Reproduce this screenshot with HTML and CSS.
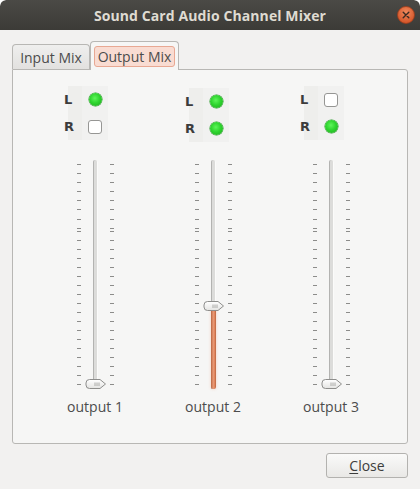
FILE: index.html
```html
<!DOCTYPE html>
<html>
<head>
<meta charset="utf-8">
<link rel="stylesheet" href="styles.css">
</head>
<body>
<div class="window">
  <header class="titlebar">
    <span></span>
    <span class="title">Sound Card Audio Channel Mixer</span>
    <span class="wclose"><svg width="18" height="18" viewBox="0 0 18 18"><defs><radialGradient id="cg" cx="50%" cy="35%" r="60%"><stop offset="0" stop-color="#f08a5d"/><stop offset="1" stop-color="#d4562a"/></radialGradient></defs><circle cx="9" cy="9" r="8.5" fill="url(#cg)" stroke="#9c3c1c" stroke-width="0.8"/><path d="M6.2 6.2 L11.8 11.8 M11.8 6.2 L6.2 11.8" stroke="#3a2a22" stroke-width="1.4" stroke-linecap="round"/></svg></span>
  </header>
  <main class="content">
    <div class="notebook">
      <div class="tabs">
        <div class="tab">Input Mix</div>
        <div class="tab active"><span class="tab-hl">Output Mix</span></div>
      </div>
      <div class="frame">
        <div class="channel">
          <div class="ind">
            <span class="lbl">L</span><span class="cell"><span class="led"></span></span>
            <span class="lbl">R</span><span class="cell"><span class="chk"></span></span>
          </div>
          <div class="slider">
            <div class="ticks">
              <i></i><i></i><i></i><i></i><i></i><i></i><i class="w"></i><i></i><i class="n"></i><i></i><i></i><i></i><i></i><i></i><i></i><i></i><i></i><i></i><i></i><i></i><i></i><i></i><i></i><i></i><i></i><i></i>
            </div>
            <div class="track"></div>
            <div class="ticks">
              <i></i><i></i><i></i><i></i><i></i><i></i><i class="w"></i><i></i><i class="n"></i><i></i><i></i><i></i><i></i><i></i><i></i><i></i><i></i><i></i><i></i><i></i><i></i><i></i><i></i><i></i><i></i><i></i>
            </div>
            <svg class="knob" style="top:218px" width="22" height="12" viewBox="0 0 22 12"><defs><linearGradient id="kg1" x1="0" y1="0" x2="0" y2="1"><stop offset="0" stop-color="#ffffff"/><stop offset="1" stop-color="#e4e4e2"/></linearGradient></defs><path d="M4.5 1.5 H15 L20.5 6 L15 10.5 H4.5 A3.5 3.5 0 0 1 1 7 V5 A3.5 3.5 0 0 1 4.5 1.5 Z" fill="url(#kg1)" stroke="#8e8e8c" stroke-width="1"/><path d="M10 4.5 V8 M12 4.5 V8 M14 4.5 V8" stroke="#9a9a98" stroke-width="0.8"/></svg>
          </div>
          <div class="name">output 1</div>
        </div>
        <div class="channel">
          <div class="ind mid">
            <span class="lbl">L</span><span class="cell"><span class="led"></span></span>
            <span class="lbl">R</span><span class="cell"><span class="led"></span></span>
          </div>
          <div class="slider mid">
            <div class="ticks">
              <i></i><i></i><i></i><i></i><i></i><i></i><i class="w"></i><i></i><i class="n"></i><i></i><i></i><i></i><i></i><i></i><i></i><i></i><i></i><i></i><i></i><i></i><i></i><i></i><i></i><i></i><i></i><i></i>
            </div>
            <div class="track"><div class="fill" style="height:80px"></div></div>
            <div class="ticks">
              <i></i><i></i><i></i><i></i><i></i><i></i><i class="w"></i><i></i><i class="n"></i><i></i><i></i><i></i><i></i><i></i><i></i><i></i><i></i><i></i><i></i><i></i><i></i><i></i><i></i><i></i><i></i><i></i>
            </div>
            <svg class="knob" style="top:140px" width="22" height="12" viewBox="0 0 22 12"><defs><linearGradient id="kg2" x1="0" y1="0" x2="0" y2="1"><stop offset="0" stop-color="#ffffff"/><stop offset="1" stop-color="#e4e4e2"/></linearGradient></defs><path d="M4.5 1.5 H15 L20.5 6 L15 10.5 H4.5 A3.5 3.5 0 0 1 1 7 V5 A3.5 3.5 0 0 1 4.5 1.5 Z" fill="url(#kg2)" stroke="#8e8e8c" stroke-width="1"/><path d="M10 4.5 V8 M12 4.5 V8 M14 4.5 V8" stroke="#9a9a98" stroke-width="0.8"/></svg>
          </div>
          <div class="name">output 2</div>
        </div>
        <div class="channel">
          <div class="ind">
            <span class="lbl">L</span><span class="cell"><span class="chk"></span></span>
            <span class="lbl">R</span><span class="cell"><span class="led"></span></span>
          </div>
          <div class="slider">
            <div class="ticks">
              <i></i><i></i><i></i><i></i><i></i><i></i><i class="w"></i><i></i><i class="n"></i><i></i><i></i><i></i><i></i><i></i><i></i><i></i><i></i><i></i><i></i><i></i><i></i><i></i><i></i><i></i><i></i><i></i>
            </div>
            <div class="track"></div>
            <div class="ticks">
              <i></i><i></i><i></i><i></i><i></i><i></i><i class="w"></i><i></i><i class="n"></i><i></i><i></i><i></i><i></i><i></i><i></i><i></i><i></i><i></i><i></i><i></i><i></i><i></i><i></i><i></i><i></i><i></i>
            </div>
            <svg class="knob" style="top:218px" width="22" height="12" viewBox="0 0 22 12"><defs><linearGradient id="kg3" x1="0" y1="0" x2="0" y2="1"><stop offset="0" stop-color="#ffffff"/><stop offset="1" stop-color="#e4e4e2"/></linearGradient></defs><path d="M4.5 1.5 H15 L20.5 6 L15 10.5 H4.5 A3.5 3.5 0 0 1 1 7 V5 A3.5 3.5 0 0 1 4.5 1.5 Z" fill="url(#kg3)" stroke="#8e8e8c" stroke-width="1"/><path d="M10 4.5 V8 M12 4.5 V8 M14 4.5 V8" stroke="#9a9a98" stroke-width="0.8"/></svg>
          </div>
          <div class="name">output 3</div>
        </div>
      </div>
    </div>
    <div class="actions">
      <button class="btn"><u>C</u>lose</button>
    </div>
  </main>
</div>
</body>
</html>
```
FILE: styles.css
```css
* { box-sizing: border-box; }
html, body { margin: 0; padding: 0; background: #ffffff; }
body { width: 420px; height: 489px; overflow: hidden; font-family: "Open Sans", "DejaVu Sans", sans-serif; color: #4c4c4c; }

.window { width: 420px; height: 489px; display: flex; flex-direction: column; background: #f2f1f0; border-radius: 6px 6px 0 0; overflow: hidden; }

.titlebar {
  height: 30px; flex: none;
  display: grid; grid-template-columns: 1fr auto 1fr; align-items: center;
  background: linear-gradient(#4b4a46, #3c3b37);
  border-radius: 6px 6px 0 0;
}
.title { color: #dfdbd2; font-weight: 700; font-size: 14px; letter-spacing: 0.1px; }
.wclose { justify-self: end; margin-right: 5px; display: flex; }

.content { flex: 1; display: flex; flex-direction: column; padding: 11px 12px 0 12px; }

.notebook { display: flex; flex-direction: column; }
.tabs { display: flex; align-items: flex-end; height: 28px; padding-left: 0; }
.tab {
  height: 25px; width: 78px; display: flex; align-items: center; justify-content: center;
  font-size: 14px; color: #4c4c4c;
  background: linear-gradient(#efefee, #e2e1df);
  border: 1px solid #b8b7b4; border-bottom: none; border-radius: 4px 4px 0 0;
}
.tab.active {
  height: 29px; width: 89px; margin-left: 0; background: #f6f6f5; margin-bottom: -1px; position: relative; z-index: 1;
  padding: 4px 3px 3px;
}
.tab-hl {
  flex: 1; align-self: stretch; display: flex; align-items: center; justify-content: center;
  background: #f9dcd2; border: 1px solid #e8a893; border-radius: 3px; font-size: 14px; color: #4c4c4c;
}

.frame {
  height: 375px; background: #f6f6f5; border: 1px solid #b8b7b4; border-radius: 0 3px 3px 3px;
  display: flex; padding-left: 23px;
}

.channel { width: 118px; display: flex; flex-direction: column; align-items: center; }

.ind {
  margin-top: 16px; margin-right: 14px;
  display: grid; grid-template-columns: 14px 26px; grid-auto-rows: 27px; align-items: center;
  background: #eeeeec;
}
.ind.mid { margin-top: 18px; margin-right: 8px; }
.lbl { font-family: "DejaVu Sans", sans-serif; font-weight: 700; font-size: 13px; color: #3c3c3c; text-align: left; margin-left: -4px; }
.cell { display: flex; justify-content: center; align-items: center; height: 27px; background: #f1f1f0; }
.led {
  width: 13px; height: 13px; border-radius: 50%;
  background: radial-gradient(circle at 45% 40%, #5ef55a 0%, #2fd52f 45%, #1ea51e 100%);
  box-shadow: 0 0 0 0.5px #2a9a2a;
}
.chk { width: 14px; height: 14px; border-radius: 3px; background: #ffffff; border: 1px solid #969694; }

.slider { position: relative; margin-top: 20px; height: 229px; display: flex; justify-content: center; gap: 10px; }
.slider.mid { margin-top: 18px; }
.ticks { display: flex; flex-direction: column; gap: 8px; padding-top: 4px; }
.ticks i { display: block; width: 4px; height: 1px; background: #8c8c8a; }
.ticks i.w { margin-top: 1px; }
.ticks i.n { margin-top: -6px; }
.track {
  width: 5px; height: 229px; background: #dcdcda; border-left: 1px solid #b3b3b1; border-right: 1px solid #fbfbfa;
  border-radius: 2px 2px 1px 1px; display: flex; flex-direction: column; justify-content: flex-end; margin: 0 2px;
}
.fill {
  width: 5px; margin-left: -1px; background: linear-gradient(90deg, #b8643f, #e89a77 45%, #e2875f 70%, #b8643f);
  border-radius: 0 0 2px 2px; box-shadow: 0 0 3px rgba(240,150,110,0.45);
}
.knob { position: absolute; left: 50%; margin-left: -10px; }

.name { margin-top: 8px; font-size: 14px; color: #4c4c4c; }

.actions { display: flex; justify-content: flex-end; padding-top: 9px; }
.btn {
  width: 82px; height: 25px; font-family: "Open Sans", "DejaVu Sans", sans-serif; font-size: 14px; color: #3c3c3c;
  background: linear-gradient(#fafaf9, #e9e8e6); border: 1px solid #b3b2af; border-radius: 3px; padding: 0;
  margin-right: 0;
}
.btn u { text-decoration-thickness: 1px; text-underline-offset: 2px; }
```
